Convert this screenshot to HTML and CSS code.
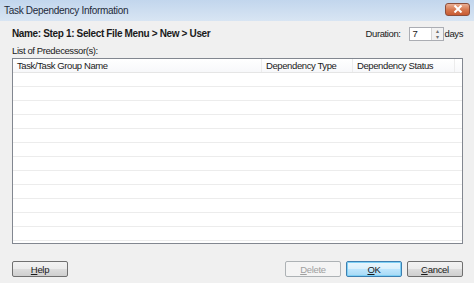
FILE: index.html
```html
<!DOCTYPE html>
<html lang="en">
<head>
  <meta charset="UTF-8">
  <title>Task Dependency Information</title>
  <link rel="stylesheet" href="styles.css">
</head>
<body>
  <div class="window">
    <div class="titlebar">
      <span class="title">Task Dependency Information</span>
      <span class="close">
        <svg width="10" height="8" viewBox="0 0 10 8"><path d="M1.5 0.5 L8.5 7.5 M8.5 0.5 L1.5 7.5" stroke="#fff" stroke-width="2"/></svg>
      </span>
    </div>

    <div class="content">
      <div class="name-row">
        <div class="task-name">Name: Step 1: Select File Menu &gt; New &gt; User</div>
        <div class="duration">
          <span class="duration-label">Duration:</span>
          <div class="spin">
            <span class="spin-value">7</span>
            <span class="spin-arrows">
              <span class="arrow">&#9652;</span>
              <span class="arrow">&#9662;</span>
            </span>
          </div>
          <span>days</span>
        </div>
      </div>

      <div class="list-label">List of Predecessor(s):</div>

      <div class="grid-box">
        <div class="grid-head">
          <div class="col col-name">Task/Task Group Name</div>
          <div class="col col-type">Dependency Type</div>
          <div class="col col-status">Dependency Status</div>
        </div>
        <div class="grid-rows" id="gridRows"></div>
      </div>

      <div class="button-row">
        <button class="btn"><u>H</u>elp</button>
        <div class="right-buttons">
          <button class="btn" disabled><u>D</u>elete</button>
          <button class="btn btn-default"><u>O</u>K</button>
          <button class="btn"><u>C</u>ancel</button>
        </div>
      </div>
    </div>
  </div>

  <script>
    // empty rows of the predecessor list
    const rows = document.getElementById("gridRows");
    for (let i = 0; i < 12; i++) {
      const row = document.createElement("div");
      row.className = "grid-row";
      rows.appendChild(row);
    }
  </script>
</body>
</html>
```

FILE: styles.css
```css
body {
  margin: 0;
  font-family: 'Liberation Sans', Arial, sans-serif;
  font-size: 9.5px;
  letter-spacing: -0.4px;
  color: #1a1a1a;
  background: #f0f0f0;
}

.window {
  width: 474px;
  height: 283px;
  overflow: hidden;
  background: #f0f0f0;
}

/* title bar */
.titlebar {
  height: 21px;
  display: flex;
  align-items: center;
  justify-content: space-between;
  padding: 0 4px 0 4px;
  background: linear-gradient(to bottom, #c2d6ed, #d8e5f3);
}

.title {
  font-size: 10px;
  color: #1e2a3a;
  letter-spacing: -0.3px;
}

.close {
  width: 23px;
  height: 11px;
  margin-top: -3px;
  display: flex;
  align-items: center;
  justify-content: center;
  border: 1px solid #8c4f3c;
  border-radius: 3px;
  background: linear-gradient(to bottom, #eab095, #d77a52 50%, #c85b32);
}

.content {
  padding: 0 11px 0 12px;
}

/* name and duration */
.name-row {
  height: 23px;
  display: flex;
  align-items: center;
  justify-content: space-between;
  margin-top: 1px;
}

.task-name {
  font-weight: bold;
  font-size: 10px;
  letter-spacing: -0.35px;
}

.duration {
  display: flex;
  align-items: center;
  gap: 1px;
}

.duration-label {
  margin-right: 7px;
}

.spin {
  width: 33px;
  height: 12px;
  display: flex;
  border: 1px solid #abadb3;
  background: #fff;
}

.spin-value {
  flex: 1;
  padding-left: 3px;
  line-height: 12px;
}

.spin-arrows {
  width: 11px;
  display: flex;
  flex-direction: column;
  background: #f2f2f2;
  border-left: 1px solid #d5d5d5;
}

.arrow {
  height: 6px;
  font-size: 6px;
  line-height: 6px;
  text-align: center;
  color: #707070;
}

.list-label {
  height: 12px;
  line-height: 12px;
}

/* predecessor grid */
.grid-box {
  height: 184px;
  margin-top: 1px;
  border: 1px solid #828790;
  background: #fff;
  overflow: hidden;
}

.grid-head {
  height: 13px;
  display: flex;
  border-bottom: 1px solid #e5e5e5;
  background: linear-gradient(to bottom, #ffffff, #f7f8fa);
}

.col {
  line-height: 14px;
  padding-left: 4px;
  border-right: 1px solid #ececec;
}

.col-name {
  width: 244px;
}

.col-type {
  width: 86px;
}

.col-status {
  width: 97px;
}

.grid-row {
  height: 13px;
  border-bottom: 1px solid #ececec;
}

/* buttons */
.button-row {
  display: flex;
  justify-content: space-between;
  margin-top: 17px;
}

.right-buttons {
  display: flex;
  gap: 5px;
}

.btn {
  width: 56px;
  height: 16px;
  padding: 0;
  font-family: 'Liberation Sans', Arial, sans-serif;
  font-size: 9.5px;
  letter-spacing: -0.3px;
  color: #1a1a1a;
  border: 1px solid #707070;
  border-radius: 2px;
  background: linear-gradient(to bottom, #f2f2f2 0%, #ebebeb 50%, #dddddd 51%, #cfcfcf 100%);
}

.btn-default {
  border-color: #3c7fb1;
  box-shadow: inset 0 0 0 1px #7fd0f5;
  background: linear-gradient(to bottom, #eaf6fd 0%, #d9f0fc 50%, #bee6fd 51%, #a7d9f5 100%);
}

.btn:disabled {
  color: #a0a0a0;
  border-color: #adb2b5;
  background: #f4f4f4;
}
```
